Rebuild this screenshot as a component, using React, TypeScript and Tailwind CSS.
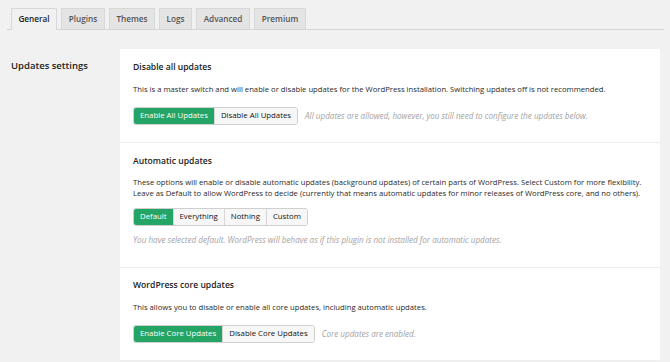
import React from 'react';

const tabs = [
  { label: 'General', w: 'w-[46px]' },
  { label: 'Plugins', w: 'w-[44px]' },
  { label: 'Themes', w: 'w-[46px]' },
  { label: 'Logs', w: 'w-[33px]' },
  { label: 'Advanced', w: 'w-[54px]' },
  { label: 'Premium', w: 'w-[52px]' },
];

const Group = ({ items, active }: { items: string[]; active: number }) => (
  <div className="flex h-[18px] rounded-[3px] border border-[#cfcfcf] overflow-hidden shrink-0">
    {items.map((label, i) => (
      <div
        key={label}
        className={`flex items-center px-[6px] text-[7.8px] ${i > 0 ? 'border-l border-[#d6d6d6]' : ''} ${
          i === active ? 'bg-[#24a465] text-white' : 'bg-[#f7f7f7] text-[#111] font-medium'
        }`}
      >
        {label}
      </div>
    ))}
  </div>
);

const Note = ({ children }: { children: React.ReactNode }) => (
  <span className="text-[8.1px] leading-[12px] italic text-[#a3a3a3]">{children}</span>
);

export default function App() {
  return (
    <div className="w-[670px] h-[362px] overflow-hidden bg-[#f1f1f1] text-[#2a2a2a] font-['Open_Sans',sans-serif]">
      {/* tabs */}
      <div className="flex gap-[4px] pt-[8px] pl-[4px] ml-[7px] mr-[6px] border-b border-[#d5d5d5] h-[30px]">
        {tabs.map((t, i) => (
          <div
            key={t.label}
            className={`${t.w} flex items-center justify-center text-[8.2px] font-semibold border border-[#d8d8d8] border-b-0 ${
              i === 0 ? 'bg-[#f1f1f1] text-[#222] h-[22px] -mb-px' : 'bg-[#e4e4e4] text-[#555] h-[21px]'
            }`}
          >
            {t.label}
          </div>
        ))}
      </div>

      <div className="flex mt-[19px]">
        <div className="w-[120px] pl-[11px] pt-[10px] text-[9.5px] leading-[14px] font-semibold text-[#222]">Updates settings</div>
        <div className="flex-1 mr-[10px] bg-white">
          <section className="pt-[11px] pb-[17px] px-[13px] border-b border-[#eee]">
            <h2 className="text-[8.6px] font-semibold leading-[14px] text-[#222]">Disable all updates</h2>
            <p className="mt-[9px] text-[7.7px] leading-[12px]">
              This is a master switch and will enable or disable updates for the WordPress installation. Switching updates off is not recommended.
            </p>
            <div className="mt-[12px] flex items-center gap-[7px]">
              <Group items={['Enable All Updates', 'Disable All Updates']} active={0} />
              <Note>All updates are allowed, however, you still need to configure the updates below.</Note>
            </div>
          </section>

          <section className="pt-[11px] pb-[21px] px-[13px] border-b border-[#eee]">
            <h2 className="text-[8.6px] font-semibold leading-[14px] text-[#222]">Automatic updates</h2>
            <p className="mt-[9px] text-[7.7px] leading-[11px]">
              These options will enable or disable automatic updates (background updates) of certain parts of WordPress. Select Custom for more flexibility.
              <br />
              Leave as Default to allow WordPress to decide (currently that means automatic updates for minor releases of WordPress core, and no others).
            </p>
            <div className="mt-[9px] flex">
              <Group items={['Default', 'Everything', 'Nothing', 'Custom']} active={0} />
            </div>
            <div className="mt-[8px] flex">
              <Note>You have selected default. WordPress will behave as if this plugin is not installed for automatic updates.</Note>
            </div>
          </section>

          <section className="pt-[10px] pb-[17px] px-[13px] border-b border-[#eee]">
            <h2 className="text-[8.6px] font-semibold leading-[14px] text-[#222]">WordPress core updates</h2>
            <p className="mt-[9px] text-[7.7px] leading-[12px]">
              This allows you to disable or enable all core updates, including automatic updates.
            </p>
            <div className="mt-[12px] flex items-center gap-[7px]">
              <Group items={['Enable Core Updates', 'Disable Core Updates']} active={0} />
              <Note>Core updates are enabled.</Note>
            </div>
          </section>
        </div>
      </div>
    </div>
  );
}
